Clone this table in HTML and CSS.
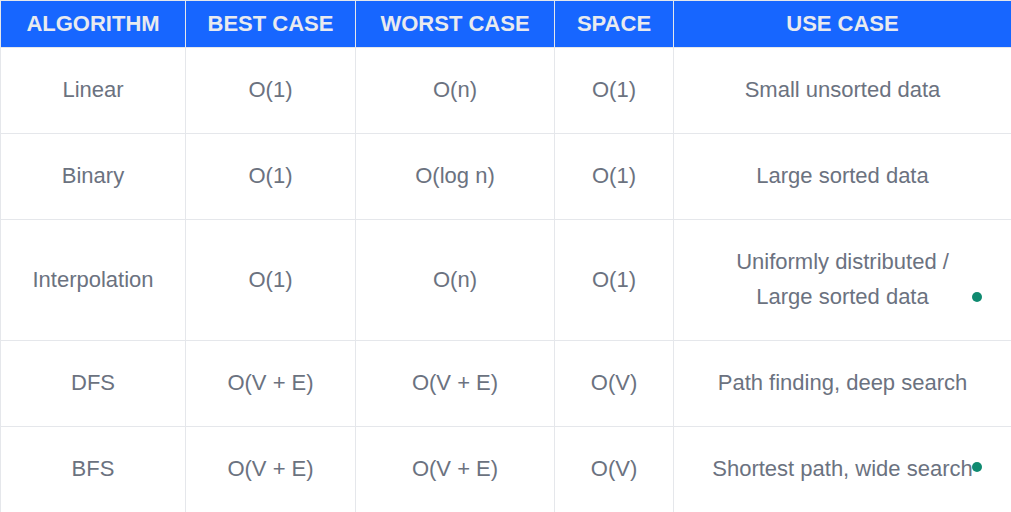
FILE: index.html
```html
<!DOCTYPE html>
<html lang="en">
<head>
<meta charset="utf-8">
<title>Search Algorithms</title>
<link rel="stylesheet" href="styles.css">
</head>
<body>
<table class="algo-table">
  <colgroup>
    <col class="c1"><col class="c2"><col class="c3"><col class="c4"><col class="c5">
  </colgroup>
  <thead>
    <tr>
      <th>Algorithm</th>
      <th>Best Case</th>
      <th>Worst Case</th>
      <th>Space</th>
      <th>Use Case</th>
    </tr>
  </thead>
  <tbody>
    <tr>
      <td>Linear</td><td>O(1)</td><td>O(n)</td><td>O(1)</td><td>Small unsorted data</td>
    </tr>
    <tr>
      <td>Binary</td><td>O(1)</td><td>O(log n)</td><td>O(1)</td><td>Large sorted data</td>
    </tr>
    <tr>
      <td>Interpolation</td><td>O(1)</td><td>O(n)</td><td>O(1)</td>
      <td class="use-dot">Uniformly distributed /<br>Large sorted data<span class="dot dot-a"></span></td>
    </tr>
    <tr>
      <td>DFS</td><td>O(V + E)</td><td>O(V + E)</td><td>O(V)</td><td>Path finding, deep search</td>
    </tr>
    <tr>
      <td>BFS</td><td>O(V + E)</td><td>O(V + E)</td><td>O(V)</td>
      <td class="use-dot">Shortest path, wide search<span class="dot dot-b"></span></td>
    </tr>
  </tbody>
</table>
</body>
</html>
```

FILE: styles.css
```css
html, body {
  margin: 0;
  padding: 0;
  background: #ffffff;
}

body {
  font-family: "Liberation Sans", Arial, sans-serif;
  overflow: hidden;
}

.algo-table {
  width: 1011px;
  table-layout: fixed;
  border-collapse: collapse;
  border: 1px solid #e5e7eb;
}

.c1 { width: 185px; }
.c2 { width: 170px; }
.c3 { width: 199px; }
.c4 { width: 119px; }
.c5 { width: 338px; }

.algo-table th {
  background: #1766ff;
  color: #e8eaef;
  font-size: 22px;
  font-weight: 700;
  text-transform: uppercase;
  line-height: 35px;
  padding: 5px 4px 6px;
  border: 1px solid #e5e7eb;
  text-align: center;
}

.algo-table td {
  color: #6b7280;
  font-size: 22px;
  line-height: 35px;
  padding: 24px 8px 26px;
  border: 1px solid #e5e7eb;
  text-align: center;
}

.use-dot {
  position: relative;
}

.dot {
  position: absolute;
  right: 29px;
  width: 10px;
  height: 10px;
  border-radius: 50%;
  background: #0f8a70;
}

.dot-a { bottom: 38px; }
.dot-b { bottom: 40px; }
```
